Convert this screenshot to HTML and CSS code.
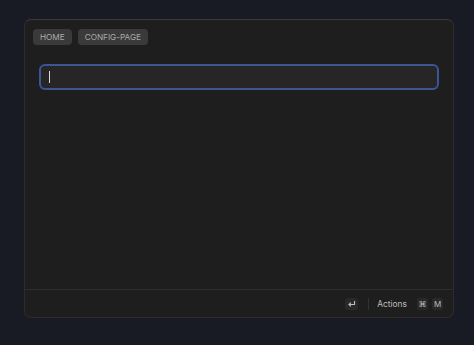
FILE: index.html
```html
<!DOCTYPE html>
<html>
<head>
<meta charset="utf-8">
<link rel="stylesheet" href="styles.css">
</head>
<body>
<div class="card">
  <div class="crumbs">
    <span class="crumb">HOME</span>
    <span class="crumb">CONFIG-PAGE</span>
  </div>
  <div class="search">
    <div class="input"><span class="caret"></span></div>
  </div>
  <div class="list"></div>
  <div class="footer">
    <span class="key key-enter">
      <svg width="9" height="8" viewBox="0 0 9 8"><path d="M7.5 1v3.5H2M3.8 2.7 2 4.5l1.8 1.8" fill="none" stroke="#bdbdbd" stroke-width="1.1"/></svg>
    </span>
    <span class="sep"></span>
    <span class="label">Actions</span>
    <span class="key">⌘</span>
    <span class="key">M</span>
  </div>
</div>
</body>
</html>
```
FILE: styles.css
```css
html, body {
  margin: 0;
  background: #181b24;
}
body {
  padding: 19px 20px 0 24px;
  font-family: Inter, "Liberation Sans", sans-serif;
  height: 345px;
  box-sizing: border-box;
}
.card {
  width: 430px;
  height: 299px;
  box-sizing: border-box;
  background: #1e1e1e;
  border: 1px solid #2c2c2c;
  border-top-color: #3a3a3a;
  border-radius: 7px;
  display: flex;
  flex-direction: column;
}
.crumbs {
  display: flex;
  gap: 6px;
  padding: 9px 8px 0;
}
.crumb {
  height: 16px;
  line-height: 16px;
  padding: 0 7px;
  background: #3a3a3a;
  color: #ababab;
  font-size: 8.2px;
  border-radius: 4px;
}
.search {
  padding: 19px 14px 0;
}
.input {
  height: 26px;
  box-sizing: border-box;
  border: 2px solid #3d5496;
  border-radius: 6px;
  background: #262626;
  display: flex;
  align-items: center;
  padding-left: 8px;
}
.caret {
  width: 1px;
  height: 12px;
  background: #d8d8d8;
}
.list {
  flex: 1;
}
.footer {
  height: 27px;
  border-top: 1px solid #2d2d2d;
  display: flex;
  align-items: center;
  justify-content: flex-end;
  padding-right: 10px;
}
.key {
  height: 12px;
  min-width: 11px;
  padding: 0 1px;
  box-sizing: border-box;
  background: #292929;
  border-radius: 3px;
  color: #bdbdbd;
  font-size: 8px;
  display: flex;
  align-items: center;
  justify-content: center;
  margin-left: 4px;
}
.key-enter {
  width: 13px;
  margin-left: 0;
}
.sep {
  width: 1px;
  height: 12px;
  background: #333;
  margin: 0 8px 0 10px;
}
.label {
  color: #bdbdbd;
  font-size: 8.4px;
  margin-right: 6px;
}
```
